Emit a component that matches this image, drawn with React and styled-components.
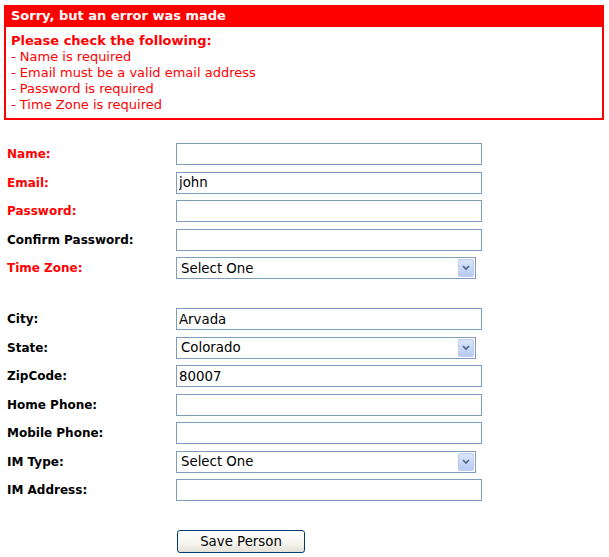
import React from "react";
import styled, { createGlobalStyle } from "styled-components";

const GlobalStyle = createGlobalStyle`
  body {
    margin: 0;
    background: #fff;
    font-family: "DejaVu Sans", Verdana, sans-serif;
  }
`;

const Page = styled.div`
  padding: 5px 5px 0 4px;
  width: 600px;
`;

const ErrorBox = styled.div`
  border: 2px solid #ff0000;
  border-top: none;
`;

const ErrorHeader = styled.div`
  background: #ff0000;
  color: #fff;
  font-weight: bold;
  font-size: 13px;
  height: 22px;
  line-height: 22px;
  margin: 0 -2px;
  padding-left: 7px;
`;

const ErrorBody = styled.div`
  color: #ff0000;
  font-size: 13px;
  line-height: 16px;
  padding: 6px 0 5px 5px;
`;

const ErrorTitle = styled.div`
  font-weight: bold;
`;

const Form = styled.div`
  display: grid;
  grid-template-columns: 169px 1fr;
  padding: 20px 0 0 3px;
  align-items: center;
`;

const Label = styled.label`
  font-size: 12px;
  font-weight: bold;
  color: ${(p) => (p.$error ? "#ff0000" : "#000")};
`;

const Spacer = styled.div`
  grid-column: 1 / 3;
  height: ${(p) => p.$h || 22.5}px;
`;

const Cell = styled.div`
  display: flex;
  align-items: center;
  height: 28.5px;
`;

const TextInput = styled.input`
  box-sizing: border-box;
  width: 306px;
  height: 22px;
  border: 1px solid #7f9db9;
  padding: 0 2px;
  margin: 0;
  font-family: "DejaVu Sans", Verdana, sans-serif;
  font-size: 13.33px;
  color: #000;
  outline: none;
`;

const SelectWrap = styled.div`
  position: relative;
  width: 300px;
  height: 22px;
`;

const Select = styled.select`
  box-sizing: border-box;
  width: 100%;
  height: 22px;
  border: 1px solid #7f9db9;
  padding: 0 0 0 4px;
  margin: 0;
  font-family: "DejaVu Sans", Verdana, sans-serif;
  font-size: 13.33px;
  color: #000;
  background: #fff;
  appearance: none;
  outline: none;
`;

const Arrow = styled.span`
  position: absolute;
  right: 2px;
  top: 2px;
  width: 16px;
  height: 18px;
  box-sizing: border-box;
  border: 1px solid #bccbf0;
  border-radius: 2px;
  background: linear-gradient(#dbe5fb, #b8cbf5);
  display: flex;
  align-items: center;
  justify-content: center;
  pointer-events: none;
`;

const ButtonRow = styled.div`
  grid-column: 2 / 3;
  display: flex;
  align-items: center;
  height: 23px;
  padding-left: 1px;
`;

const Button = styled.button`
  box-sizing: border-box;
  width: 128px;
  height: 23px;
  border: 1px solid #003c74;
  border-radius: 3px;
  background: linear-gradient(#ffffff 0%, #f5f4ee 60%, #e3e1d6 100%);
  font-family: "DejaVu Sans", Verdana, sans-serif;
  font-size: 13.33px;
  color: #000;
  padding: 0;
`;

const Chevron = () => (
  <svg width="8" height="6" viewBox="0 0 8 6">
    <path d="M1 1 L4 4 L7 1" fill="none" stroke="#4d6185" strokeWidth="1.6" />
  </svg>
);

const Dropdown = ({ value, options }) => (
  <SelectWrap>
    <Select defaultValue={value}>
      {options.map((o) => (
        <option key={o}>{o}</option>
      ))}
    </Select>
    <Arrow>
      <Chevron />
    </Arrow>
  </SelectWrap>
);

const Row = ({ label, error, children }) => (
  <>
    <Label $error={error}>{label}</Label>
    <Cell>{children}</Cell>
  </>
);

export default function App() {
  return (
    <>
      <GlobalStyle />
      <Page>
        <ErrorBox>
          <ErrorHeader>Sorry, but an error was made</ErrorHeader>
          <ErrorBody>
            <ErrorTitle>Please check the following:</ErrorTitle>
            <div>- Name is required</div>
            <div>- Email must be a valid email address</div>
            <div>- Password is required</div>
            <div>- Time Zone is required</div>
          </ErrorBody>
        </ErrorBox>
        <Form>
          <Row label="Name:" error>
            <TextInput type="text" defaultValue="" />
          </Row>
          <Row label="Email:" error>
            <TextInput type="text" defaultValue="john" />
          </Row>
          <Row label="Password:" error>
            <TextInput type="password" defaultValue="" />
          </Row>
          <Row label="Confirm Password:">
            <TextInput type="password" defaultValue="" />
          </Row>
          <Row label="Time Zone:" error>
            <Dropdown value="Select One" options={["Select One", "Mountain", "Pacific"]} />
          </Row>
          <Spacer />
          <Row label="City:">
            <TextInput type="text" defaultValue="Arvada" />
          </Row>
          <Row label="State:">
            <Dropdown value="Colorado" options={["Select One", "Colorado", "Utah"]} />
          </Row>
          <Row label="ZipCode:">
            <TextInput type="text" defaultValue="80007" />
          </Row>
          <Row label="Home Phone:">
            <TextInput type="text" defaultValue="" />
          </Row>
          <Row label="Mobile Phone:">
            <TextInput type="text" defaultValue="" />
          </Row>
          <Row label="IM Type:">
            <Dropdown value="Select One" options={["Select One", "AIM", "MSN"]} />
          </Row>
          <Row label="IM Address:">
            <TextInput type="text" defaultValue="" />
          </Row>
          <Spacer $h={25.5} />
          <ButtonRow>
            <Button type="button">Save Person</Button>
          </ButtonRow>
        </Form>
      </Page>
    </>
  );
}
